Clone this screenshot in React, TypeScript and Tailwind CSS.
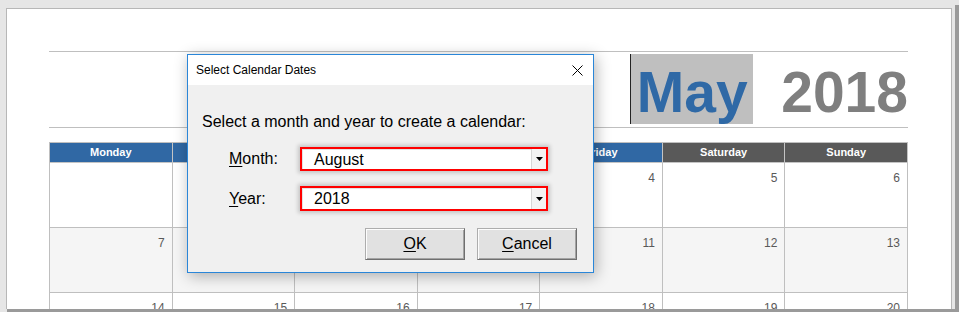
import React from "react";

const days = [
  "Monday",
  "Tuesday",
  "Wednesday",
  "Thursday",
  "Friday",
  "Saturday",
  "Sunday",
];

const weeks = [
  ["", "1", "2", "3", "4", "5", "6"],
  ["7", "8", "9", "10", "11", "12", "13"],
  ["14", "15", "16", "17", "18", "19", "20"],
];

const ComboBox = ({ value, height }: { value: string; height: string }) => (
  <div
    className={`w-[248px] ${height} flex border-2 border-[#ff0000] bg-white shadow-[0_0_4px_2px_rgba(0,0,0,0.18)]`}
  >
    <div className="flex-1 flex items-center pl-[11px] border-t border-l border-[#e3e3e3] leading-none">
      {value}
    </div>
    <div className="w-[15px] flex items-center justify-center bg-[#f3f3f3] border-l border-[#d6d6d6]">
      <svg width="7" height="4" viewBox="0 0 7 4">
        <path d="M0 0 H7 L3.5 4 Z" fill="#000" />
      </svg>
    </div>
  </div>
);

const WinButton = ({ first, rest }: { first: string; rest: string }) => (
  <div className="w-[100px] h-[32px] flex items-center justify-center bg-[#e1e1e1] border border-[#adadad] border-r-[#6f6f6f] border-b-[#6f6f6f] shadow-[inset_1px_1px_0_#fdfdfd,inset_-1px_-1px_0_#a3a3a3]">
    <span className="underline underline-offset-2">{first}</span>
    {rest}
  </div>
);

export default function App() {
  return (
    <div className="relative w-[959px] h-[312px] overflow-hidden bg-[#e6e6e6] font-['Liberation_Sans',Arial,sans-serif]">
      <div className="flex pt-[8px] pl-[6px] h-[309px]">
        <div className="w-[946px] h-[301px] bg-white border-l border-t border-r border-[#b7b7b7] overflow-hidden">
          <div className="ml-[42px] mt-[42px] w-[859px]">
            <div className="h-px bg-[#bfbfbf]" />
            <div className="h-[75px] flex justify-end items-start">
              <div className="mt-[2px] h-[70px] w-[123px] bg-[#bfbfbf] border-l border-[#222] text-center text-[57px] font-bold text-[#2f69a6] leading-[63px] pt-[7px]">
                May
              </div>
              <div className="ml-[28px] mt-[2px] h-[70px] text-[57px] font-bold text-[#7f7f7f] leading-[63px] pt-[7px]">
                2018
              </div>
            </div>
            <div className="h-px bg-[#bfbfbf]" />
            <div className="mt-[14px] grid grid-cols-7 border-l border-t border-[#bfbfbf]">
              {days.map((d, i) => (
                <div
                  key={d}
                  className={`h-[20px] border-r border-b border-[#c4c4c4] flex items-center justify-center text-[11px] font-bold text-white ${
                    i < 5 ? "bg-[#3068a4]" : "bg-[#595959]"
                  }`}
                >
                  {d}
                </div>
              ))}
              {weeks.map((week, r) =>
                week.map((n, c) => (
                  <div
                    key={`${r}-${c}`}
                    className={`h-[65px] border-r border-b border-[#bfbfbf] text-right pr-[7px] pt-[8px] text-[12px] leading-[14px] text-[#595959] ${
                      r === 1 ? "bg-[#f5f5f5]" : "bg-white"
                    }`}
                  >
                    {n}
                  </div>
                ))
              )}
            </div>
          </div>
        </div>
        <div className="ml-[3px] -mt-[3px] w-[4px] h-[304px] bg-[#9a9a9a]" />
      </div>
      <div className="ml-[7px] h-[3px] bg-[#9a9a9a]" />

      {/* dialog */}
      <div className="absolute left-[187px] top-[54px] w-[407px] h-[219px] border border-[#2a86d8] bg-[#f0f0f0] shadow-[2px_3px_14px_rgba(0,0,0,0.3)]">
        <div className="h-[30px] bg-white flex items-center justify-between pl-[8px] pr-[10px] text-[12px] text-black">
          <span>Select Calendar Dates</span>
          <svg width="11" height="11" viewBox="0 0 11 11">
            <path d="M0.5 0.5 L10.5 10.5 M10.5 0.5 L0.5 10.5" stroke="#000" strokeWidth="1" />
          </svg>
        </div>
        <div className="pl-[14px] pt-[28px] text-[16px] text-black">
          <div className="leading-[18px]">
            Select a month and year to create a calendar:
          </div>
          <div className="mt-[16px] flex items-center pl-[27px]">
            <div className="w-[71px]">
              <span className="underline underline-offset-2">M</span>onth:
            </div>
            <ComboBox value="August" height="h-[24px]" />
          </div>
          <div className="mt-[15px] flex items-center pl-[27px]">
            <div className="w-[71px]">
              <span className="underline underline-offset-2">Y</span>ear:
            </div>
            <ComboBox value="2018" height="h-[25px]" />
          </div>
          <div className="mt-[17px] flex pl-[163px] gap-[12px]">
            <WinButton first="O" rest="K" />
            <WinButton first="C" rest="ancel" />
          </div>
        </div>
      </div>
    </div>
  );
}
